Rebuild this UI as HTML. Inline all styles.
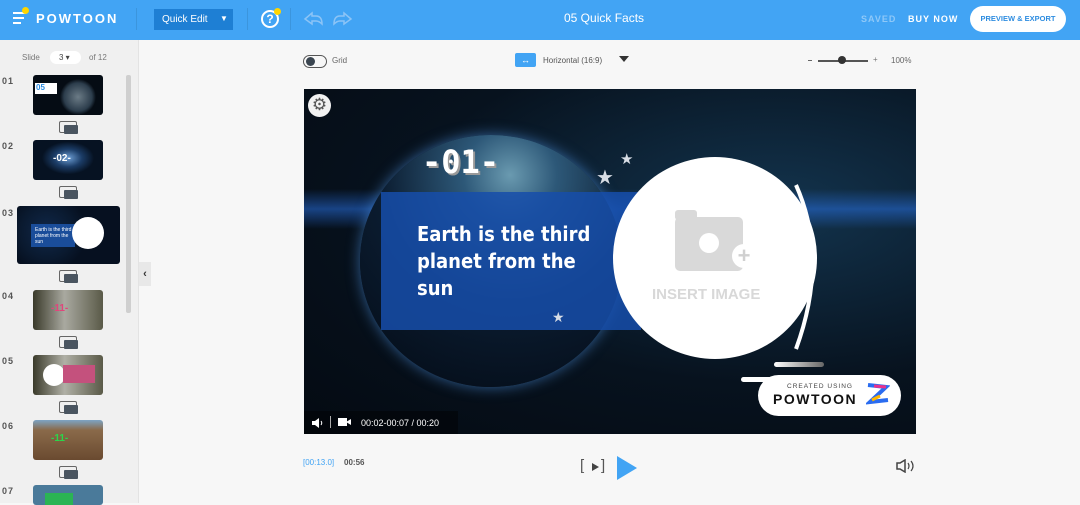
<!DOCTYPE html>
<html><head><style>
*{margin:0;padding:0;box-sizing:border-box}
body{width:1080px;height:503px;overflow:hidden;background:#f7f7f7;font-family:"Liberation Sans",sans-serif;position:relative}
.a{position:absolute}
.top{left:0;top:0;width:1080px;height:40px;background:#42a4f4}
.side{left:0;top:40px;width:139px;height:463px;background:#f0f0f0;border-right:1px solid #e3e3e3}
.num{font-size:9px;color:#555;font-weight:bold;letter-spacing:1px}
.th{border-radius:3px;overflow:hidden;background:#0b1a2c}
.dup{width:18px;height:12px;border:1.5px solid #666;border-radius:2px;background:#f0f0f0}
.dup:after{content:"";position:absolute;left:4px;top:3px;width:14px;height:9px;background:#4a5560;border-radius:1px}
</style></head><body>
<div class="a top"></div>
<div class="a" style="left:13px;top:12px;width:13px;height:2px;background:#fff"></div>
<div class="a" style="left:13px;top:17px;width:11px;height:2px;background:#fff"></div>
<div class="a" style="left:13px;top:22px;width:8px;height:2px;background:#fff"></div>
<div class="a" style="left:22px;top:7px;width:7px;height:7px;border-radius:50%;background:#ffd600"></div>
<div class="a" style="left:36px;top:11px;color:#fff;font-size:13px;font-weight:bold;letter-spacing:2px">POWTOON</div>
<div class="a" style="left:136px;top:8px;width:1px;height:22px;background:#3b95dd"></div>
<div class="a" style="left:154px;top:9px;width:79px;height:21px;background:#1e7fd4;color:#fff;font-size:10px;padding:5px 0 0 8px">Quick Edit <span style="position:absolute;left:66px;top:5px;font-size:8px">▼</span></div>
<div class="a" style="left:247px;top:8px;width:1px;height:22px;background:#3b95dd"></div>
<div class="a" style="left:261px;top:10px;width:18px;height:18px;border:2px solid #fff;border-radius:50%;color:#fff;font-size:12px;font-weight:bold;text-align:center;line-height:14px">?</div>
<div class="a" style="left:274px;top:8px;width:7px;height:7px;border-radius:50%;background:#ffd600"></div>
<div class="a" style="left:290px;top:8px;width:1px;height:22px;background:#3b95dd"></div>
<svg class="a" style="left:302px;top:10px" width="52" height="18"><path d="M3 9 L10 3 V6 H14 Q20 6 20 14 Q17 11 14 11 H10 V14Z" fill="none" stroke="#8cc4f6" stroke-width="1.5"/><path d="M49 9 L42 3 V6 H38 Q32 6 32 14 Q35 11 38 11 H42 V14Z" fill="none" stroke="#8cc4f6" stroke-width="1.5"/></svg>
<div class="a" style="left:564px;top:11px;color:#fff;font-size:12px">05 Quick Facts</div>
<div class="a" style="left:861px;top:14px;color:#8ec8f8;font-size:9px;font-weight:bold;letter-spacing:1px">SAVED</div>
<div class="a" style="left:908px;top:14px;color:#fff;font-size:9px;font-weight:bold;letter-spacing:1px">BUY NOW</div>
<div class="a" style="left:970px;top:6px;width:96px;height:26px;border-radius:13px;background:#fff;color:#2f8de0;font-size:7.5px;font-weight:bold;text-align:center;line-height:26px">PREVIEW &amp; EXPORT</div>

<div class="a side"></div>
<div class="a" style="left:22px;top:53px;font-size:8px;color:#777">Slide</div>
<div class="a" style="left:50px;top:51px;width:31px;height:13px;border-radius:7px;background:#fff;font-size:8px;color:#444;padding:2px 0 0 9px">3 ▾</div>
<div class="a" style="left:89px;top:53px;font-size:8px;color:#777">of 12</div>
<div class="a" style="left:126px;top:75px;width:5px;height:238px;background:#cfcfcf;border-radius:2px"></div>
<div class="a" style="left:139px;top:262px;width:12px;height:24px;background:#e8e8e8;font-size:11px;color:#333;text-align:center;line-height:24px;font-weight:bold">‹</div>

<div class="a num" style="left:2px;top:76px">01</div>
<div class="a th" style="left:33px;top:75px;width:70px;height:40px;background:radial-gradient(circle at 45px 22px,#6b7b86 0,#2c3d4c 14px,#050c14 18px)"><div class="a" style="left:2px;top:8px;width:22px;height:11px;background:#fff"></div><div class="a" style="left:3px;top:8px;font-size:8px;color:#2a8be0;font-weight:bold">05</div></div>
<div class="a dup" style="left:59px;top:121px"></div>
<div class="a num" style="left:2px;top:141px">02</div>
<div class="a th" style="left:33px;top:140px;width:70px;height:40px;background:radial-gradient(ellipse at 35px 18px,#6d9ed4 0,#1b3c66 14px,#061222 26px)"><div class="a" style="left:20px;top:13px;color:#fff;font-size:10px;font-weight:bold">-02-</div></div>
<div class="a dup" style="left:59px;top:186px"></div>
<div class="a num" style="left:2px;top:208px">03</div>
<div class="a th" style="left:17px;top:206px;width:103px;height:58px;background:radial-gradient(circle at 30px 26px,#10284a 0,#0a1a30 26px,#061020 40px)"><div class="a" style="left:14px;top:18px;width:44px;height:23px;background:#1a4d9a;color:#fff;font-size:5px;padding:3px 0 0 4px">Earth is the third planet from the sun</div><div class="a" style="left:55px;top:11px;width:32px;height:32px;border-radius:50%;background:#fff"></div></div>
<div class="a dup" style="left:59px;top:270px"></div>
<div class="a num" style="left:2px;top:291px">04</div>
<div class="a th" style="left:33px;top:290px;width:70px;height:40px;background:linear-gradient(90deg,#3a3a2a,#a9a9a0 45%,#5a5a48)"><div class="a" style="left:18px;top:13px;color:#e0467c;font-size:10px;font-weight:bold">-11-</div></div>
<div class="a dup" style="left:59px;top:336px"></div>
<div class="a num" style="left:2px;top:356px">05</div>
<div class="a th" style="left:33px;top:355px;width:70px;height:40px;background:linear-gradient(90deg,#3a3a2a,#b0b0a6 45%,#5a5a48)"><div class="a" style="left:10px;top:9px;width:22px;height:22px;border-radius:50%;background:#fff"></div><div class="a" style="left:30px;top:10px;width:32px;height:18px;background:#c4517d"></div></div>
<div class="a dup" style="left:59px;top:401px"></div>
<div class="a num" style="left:2px;top:421px">06</div>
<div class="a th" style="left:33px;top:420px;width:70px;height:40px;background:linear-gradient(180deg,#7da4c4 0,#8a6a4a 25%,#6a4a30)"><div class="a" style="left:18px;top:13px;color:#2ad64a;font-size:10px;font-weight:bold">-11-</div></div>
<div class="a dup" style="left:59px;top:466px"></div>
<div class="a num" style="left:2px;top:486px">07</div>
<div class="a th" style="left:33px;top:485px;width:70px;height:20px;background:#4a7a9a"><div class="a" style="left:12px;top:8px;width:28px;height:12px;background:#2bb454"></div></div>

<div class="a" style="left:303px;top:55px;width:24px;height:13px;border:1.5px solid #555;border-radius:7px"></div>
<div class="a" style="left:306px;top:57px;width:9px;height:9px;border-radius:50%;background:#3a4550"></div>
<div class="a" style="left:332px;top:56px;font-size:8px;color:#666">Grid</div>
<div class="a" style="left:515px;top:53px;width:21px;height:14px;background:#42a4f4;border-radius:2px;color:#fff;font-size:9px;text-align:center;line-height:14px">↔</div>
<div class="a" style="left:543px;top:56px;font-size:8px;color:#555">Horizontal (16:9)</div>
<div class="a" style="left:619px;top:56px;width:0;height:0;border-left:5px solid transparent;border-right:5px solid transparent;border-top:6px solid #333"></div>
<div class="a" style="left:808px;top:60px;width:4px;height:1px;background:#666"></div>
<div class="a" style="left:818px;top:60px;width:50px;height:1.5px;background:#555"></div>
<div class="a" style="left:838px;top:56px;width:8px;height:8px;border-radius:50%;background:#333"></div>
<div class="a" style="left:873px;top:55px;font-size:8px;color:#777">+</div>
<div class="a" style="left:891px;top:56px;font-size:8px;color:#666">100%</div>

<div class="a" style="left:304px;top:89px;width:612px;height:345px;overflow:hidden;background:radial-gradient(ellipse at 470px 120px,#13344e 0,#07121e 55%,#040a12 100%)">
 <div class="a" style="left:0;top:100px;width:612px;height:40px;background:linear-gradient(180deg,transparent,rgba(40,110,220,.55) 50%,transparent)"></div>
 <div class="a" style="left:56px;top:46px;width:262px;height:252px;border-radius:50%;background:radial-gradient(circle at 150px 40px,#6a9ab0 0,#2d5878 18%,#0b1c30 50%,#030a14 100%);box-shadow:0 0 14px rgba(80,150,230,.6)"></div>
 <div class="a" style="left:77px;top:103px;width:260px;height:138px;background:rgba(22,78,170,.85)"></div>
 <div class="a" style="left:113px;top:132px;color:#fff;font-size:20px;line-height:27px;font-weight:bold;font-family:'DejaVu Sans Condensed','Liberation Sans',sans-serif;font-stretch:condensed">Earth is the third<br>planet from the<br>sun</div>
 <div class="a" style="left:118px;top:54px;color:#fff;font-size:32px;font-weight:bold;font-family:'DejaVu Sans Mono',monospace;text-shadow:2px 2px 0 #999">-01-</div>
 <div class="a" style="left:292px;top:76px;color:#d8dde5;font-size:20px">★</div>
 <div class="a" style="left:316px;top:61px;color:#d8dde5;font-size:15px">★</div>
 <div class="a" style="left:248px;top:220px;color:#d8dde5;font-size:14px">★</div>
 <div class="a" style="left:309px;top:68px;width:204px;height:202px;border-radius:50%;background:#fff"></div>
 <div class="a" style="left:371px;top:128px;width:68px;height:54px;border-radius:5px;background:#d9d9d9"></div>
 <div class="a" style="left:371px;top:121px;width:22px;height:10px;border-radius:3px;background:#d9d9d9"></div>
 <div class="a" style="left:395px;top:144px;width:20px;height:20px;border-radius:50%;background:#fff"></div>
 <div class="a" style="left:428px;top:155px;width:24px;height:24px;border-radius:50%;background:#fff;color:#d0d0d0;font-size:22px;font-weight:bold;text-align:center;line-height:24px">+</div>
 <div class="a" style="left:348px;top:197px;color:#d8d8d8;font-size:15px;font-weight:bold">INSERT IMAGE</div>
 <svg class="a" style="left:480px;top:90px" width="60" height="180"><path d="M12 6 Q45 80 12 170" fill="none" stroke="#fff" stroke-width="4"/></svg>
 <div class="a" style="left:470px;top:273px;width:50px;height:5px;border-radius:3px;background:linear-gradient(90deg,#fff,#666)"></div>
 <div class="a" style="left:437px;top:288px;width:50px;height:5px;border-radius:3px;background:#fff"></div>
 <div class="a" style="left:454px;top:286px;width:143px;height:41px;border-radius:21px;background:#fff"></div>
 <div class="a" style="left:483px;top:294px;font-size:6.5px;color:#444;letter-spacing:1px">CREATED USING</div>
 <div class="a" style="left:469px;top:302px;font-size:14px;color:#111;font-weight:bold;letter-spacing:1.5px">POWTOON</div>
 <svg class="a" style="left:562px;top:293px" width="24" height="24"><path d="M2 3 L20 5 L4 20 L22 18" fill="none" stroke="#2a6cf0" stroke-width="4"/><path d="M8 4 L20 5" stroke="#e8318c" stroke-width="3"/><path d="M14 14 L6 18" stroke="#ffb800" stroke-width="3"/></svg>
 <div class="a" style="left:4px;top:5px;width:23px;height:23px;border-radius:50%;background:#f2f2f2;color:#555;font-size:17px;text-align:center;line-height:22px">⚙</div>
 <div class="a" style="left:0;top:322px;width:154px;height:23px;background:rgba(0,0,0,.4)"></div>
 <svg class="a" style="left:7px;top:328px" width="14" height="12"><path d="M1 4 H4 L8 1 V11 L4 8 H1Z" fill="#fff"/><path d="M10 4 Q11.5 6 10 8" stroke="#fff" fill="none"/></svg>
 <div class="a" style="left:26px;top:327px;width:1px;height:12px;background:#aaa"></div>
 <div class="a" style="left:34px;top:329px;width:9px;height:8px;background:#fff"></div>
 <div class="a" style="left:42px;top:330px;width:0;height:0;border-top:3px solid transparent;border-bottom:3px solid transparent;border-right:5px solid #fff"></div>
 <div class="a" style="left:57px;top:329px;color:#fff;font-size:9px">00:02-00:07 / 00:20</div>
</div>

<div class="a" style="left:303px;top:458px;font-size:8px;color:#42a4f4">[00:13.0]</div>
<div class="a" style="left:344px;top:458px;font-size:8px;color:#555;font-weight:bold">00:56</div>
<div class="a" style="left:580px;top:457px;font-size:15px;color:#555">[</div>
<div class="a" style="left:592px;top:463px;width:0;height:0;border-top:4px solid transparent;border-bottom:4px solid transparent;border-left:7px solid #444"></div>
<div class="a" style="left:601px;top:457px;font-size:15px;color:#555">]</div>
<div class="a" style="left:617px;top:456px;width:0;height:0;border-top:12px solid transparent;border-bottom:12px solid transparent;border-left:20px solid #42a4f4"></div>
<svg class="a" style="left:895px;top:459px" width="22" height="14"><path d="M2 4 H5 L10 1 V13 L5 10 H2Z" fill="none" stroke="#444" stroke-width="1.5"/><path d="M13 4 Q15 7 13 10 M16 2 Q20 7 16 12" fill="none" stroke="#444" stroke-width="1.2"/></svg>
</body></html>
